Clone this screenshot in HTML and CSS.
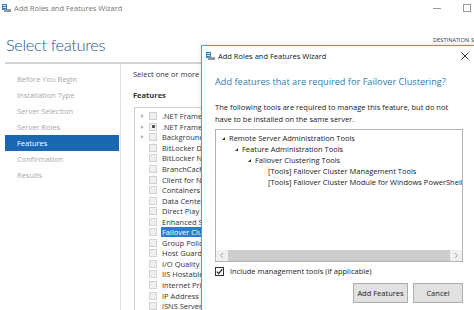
FILE: index.html
```html
<!DOCTYPE html>
<html lang="en">
<head>
<meta charset="UTF-8">
<link rel="stylesheet" href="styles.css">
<title>Add Roles and Features Wizard</title>
</head>
<body>
<div class="window">

  <!-- title bar -->
  <div class="titlebar">
    <svg class="appicon" width="9" height="8" viewBox="0 0 9 8">
      <rect x="0" y="0" width="5" height="6" fill="#3b7fc4"/>
      <rect x="1" y="1" width="3" height="1" fill="#d6e7f7"/>
      <rect x="1" y="3" width="3" height="1" fill="#d6e7f7"/>
      <rect x="2" y="5" width="7" height="3" fill="#8c9aa6"/>
    </svg>
    <span class="title">Add Roles and Features Wizard</span>
    <div class="winctl">
      <span class="min"></span>
      <span class="max"></span>
    </div>
  </div>

  <!-- header -->
  <div class="header">
    <h1>Select features</h1>
    <div class="dest">DESTINATION S</div>
  </div>

  <div class="main">
    <ul class="nav">
      <li>Before You Begin</li>
      <li>Installation Type</li>
      <li>Server Selection</li>
      <li>Server Roles</li>
      <li class="current">Features</li>
      <li>Confirmation</li>
      <li>Results</li>
    </ul>

    <div class="content">
      <p class="intro">Select one or more features to install on the selected server.</p>
      <h2>Features</h2>
      <div class="featlist">
        <div class="row"><span class="tri"></span><span class="cb"></span><span class="name">.NET Framework 3.5 Features</span></div>
        <div class="row"><span class="tri"></span><span class="cb part"></span><span class="name">.NET Framework 4.6 Features</span></div>
        <div class="row"><span class="tri"></span><span class="cb"></span><span class="name">Background Intelligent Transfer Service</span></div>
        <div class="row"><span class="notri"></span><span class="cb"></span><span class="name">BitLocker Drive Encryption</span></div>
        <div class="row"><span class="notri"></span><span class="cb"></span><span class="name">BitLocker Network Unlock</span></div>
        <div class="row"><span class="notri"></span><span class="cb"></span><span class="name">BranchCache</span></div>
        <div class="row"><span class="notri"></span><span class="cb"></span><span class="name">Client for NFS</span></div>
        <div class="row"><span class="notri"></span><span class="cb"></span><span class="name">Containers</span></div>
        <div class="row"><span class="notri"></span><span class="cb"></span><span class="name">Data Center Bridging</span></div>
        <div class="row"><span class="notri"></span><span class="cb"></span><span class="name">Direct Play</span></div>
        <div class="row"><span class="notri"></span><span class="cb"></span><span class="name">Enhanced Storage</span></div>
        <div class="row"><span class="notri"></span><span class="cb"></span><span class="name sel">Failover Clustering</span></div>
        <div class="row"><span class="notri"></span><span class="cb"></span><span class="name">Group Policy Management</span></div>
        <div class="row"><span class="notri"></span><span class="cb"></span><span class="name">Host Guardian Hyper-V Support</span></div>
        <div class="row"><span class="notri"></span><span class="cb"></span><span class="name">I/O Quality of Service</span></div>
        <div class="row"><span class="notri"></span><span class="cb"></span><span class="name">IIS Hostable Web Core</span></div>
        <div class="row"><span class="notri"></span><span class="cb"></span><span class="name">Internet Printing Client</span></div>
        <div class="row"><span class="notri"></span><span class="cb"></span><span class="name">IP Address Management (IPAM) Server</span></div>
        <div class="row"><span class="notri"></span><span class="cb"></span><span class="name">iSNS Server service</span></div>
      </div>
    </div>
  </div>

  <!-- modal dialog -->
  <div class="dialog">
    <div class="dlg-title">
      <svg class="appicon" width="9" height="8" viewBox="0 0 9 8">
        <rect x="0" y="0" width="5" height="6" fill="#3b7fc4"/>
        <rect x="1" y="1" width="3" height="1" fill="#d6e7f7"/>
        <rect x="1" y="3" width="3" height="1" fill="#d6e7f7"/>
        <rect x="2" y="5" width="7" height="3" fill="#8c9aa6"/>
      </svg>
      <span class="dlg-name">Add Roles and Features Wizard</span>
      <svg class="close" width="8" height="8" viewBox="0 0 8 8">
        <path d="M0.5 0.5 L7.5 7.5 M7.5 0.5 L0.5 7.5" stroke="#333" stroke-width="1"/>
      </svg>
    </div>
    <div class="dlg-body">
      <h3>Add features that are required for Failover Clustering?</h3>
      <p class="desc">The following tools are required to manage this feature, but do not<br>have to be installed on the same server.</p>
      <div class="tree">
        <div class="tree-items">
          <div class="node lv0"><span class="exp"></span>Remote Server Administration Tools</div>
          <div class="node lv1"><span class="exp"></span>Feature Administration Tools</div>
          <div class="node lv2"><span class="exp"></span>Failover Clustering Tools</div>
          <div class="node lv3">[Tools] Failover Cluster Management Tools</div>
          <div class="node lv3">[Tools] Failover Cluster Module for Windows PowerShell</div>
        </div>
        <div class="hscroll">
          <svg class="arrow" width="12" height="11" viewBox="0 0 12 11"><path d="M7 3 L4.5 5.5 L7 8" fill="none" stroke="#a0a0a0" stroke-width="1"/></svg>
          <span class="thumb"></span>
          <svg class="arrow" width="12" height="11" viewBox="0 0 12 11"><path d="M5 3 L7.5 5.5 L5 8" fill="none" stroke="#a0a0a0" stroke-width="1"/></svg>
        </div>
      </div>
      <label class="include">
        <span class="check">
          <svg width="7" height="7" viewBox="0 0 7 7"><path d="M0.8 3.6 L2.7 5.6 L6.3 1.2" fill="none" stroke="#222" stroke-width="1.3"/></svg>
        </span>
        Include management tools (if applicable)
      </label>
      <div class="buttons">
        <button type="button" class="btn">Add Features</button>
        <button type="button" class="btn">Cancel</button>
      </div>
    </div>
  </div>

</div>
</body>
</html>
```

FILE: styles.css
```css
body { margin: 0; font-family: "Open Sans", "Noto Sans", sans-serif; font-size: 7.5px; color: #222; background: #fff; }
.window { position: relative; width: 474px; height: 310px; overflow: hidden; background: #fff; }

.titlebar { height: 16px; display: flex; align-items: center; padding-left: 2px; color: #777; }
.titlebar .title { margin-left: 3px; }
.winctl { margin-left: auto; display: flex; align-items: center; gap: 22px; padding-right: 3px; }
.winctl .min { width: 8px; height: 1px; background: #999; }
.winctl .max { width: 6px; height: 6px; border: 1px solid #999; }

.header { height: 46px; margin-left: 5px; border-bottom: 2px solid #d4d4d4; display: flex; align-items: flex-start; }
.header h1 { margin: 17px 0 0 1px; font-family: Lato, "Open Sans", sans-serif; font-size: 16.5px; letter-spacing: -0.4px; font-weight: 300; color: #27598a; line-height: 24px; }
.dest { margin-left: auto; margin-top: 20px; font-size: 5.5px; color: #333; letter-spacing: 0.1px; white-space: nowrap; }

.main { display: flex; height: 246px; }
.nav { list-style: none; margin: 0 0 0 5px; padding: 7px 0 0; width: 115px; border-right: 1px solid #e2e2e2; }
.nav li { height: 16px; line-height: 16px; padding-left: 12px; color: #a9a9a9; }
.nav li.current { background: #1a68b4; color: #fff; margin-right: 1px; }

.content { padding: 4px 0 0 12px; width: 68px; overflow: hidden; }
.intro { margin: 0; line-height: 12px; color: #333; white-space: nowrap; }
.content h2 { margin: 9px 0 0; font-size: 7.5px; font-weight: bold; line-height: 12px; color: #333; }
.featlist { margin: 6px 0 0 1px; border: 1px solid #d0d0d0; border-right: none; padding-top: 3px; height: 240px; }
.row { height: 10.55px; display: flex; align-items: center; white-space: nowrap; }
.tri, .notri { width: 8px; margin-left: 6px; height: 6px; flex: none; }
.tri { width: 0; height: 0; border-left: 3px solid #b8b8b8; border-top: 2.5px solid transparent; border-bottom: 2.5px solid transparent; margin-right: 5px; }
.cb { width: 8px; height: 8px; border: 1px solid #d2d2d2; background: #efefef; box-sizing: border-box; margin-right: 5px; flex: none; position: relative; }
.cb.part::after { content: ""; position: absolute; left: 1.5px; top: 1.5px; width: 3px; height: 3px; background: #555; }
.name { color: #333; padding: 0 1px; margin-left: -1px; line-height: 10px; }
.name.sel { background: #2a7dd2; color: #fff; padding-right: 20px; }

.dialog { position: absolute; left: 201px; top: 45px; width: 290px; height: 280px; background: #fff; border: 1px solid #4f9be0; box-shadow: 0 0 5px rgba(0,0,0,0.12); }
.dlg-title { height: 20px; display: flex; align-items: center; padding-left: 4px; color: #111; white-space: nowrap; }
.dlg-name { margin-left: 3px; }
.dlg-title .close { margin-left: auto; margin-right: 23px; }
.dlg-body { padding: 0 13px; width: 248px; }
.dlg-body h3 { margin: 9px 0 0; font-size: 9.2px; font-weight: normal; color: #2e7cb0; line-height: 14px; white-space: nowrap; }
.desc { margin: 12px 0 0; line-height: 12px; color: #222; white-space: nowrap; }
.tree { margin-top: 4px; border: 1px solid #b4b4b4; height: 131px; display: flex; flex-direction: column; overflow: hidden; }
.tree-items { flex: 1; padding-top: 3px; }
.node { height: 11px; line-height: 11px; white-space: nowrap; display: flex; align-items: center; color: #222; }
.node.lv0 { padding-left: 6px; }
.node.lv1 { padding-left: 19px; }
.node.lv2 { padding-left: 32px; }
.node.lv3 { padding-left: 52px; }
.exp { width: 0; height: 0; border-left: 3.5px solid transparent; border-bottom: 3.5px solid #333; margin-right: 4px; flex: none; }
.hscroll { height: 11px; background: #f0f0f0; display: flex; align-items: center; }
.hscroll .arrow { flex: none; }
.hscroll .thumb { flex: 1; height: 11px; background: #cdcdcd; }

.include { display: flex; align-items: center; margin-top: 4px; height: 10px; color: #222; }
.check { width: 9px; height: 9px; border: 1px solid #333; box-sizing: border-box; display: flex; align-items: center; justify-content: center; margin-right: 6px; }
.buttons { display: flex; justify-content: flex-end; gap: 5px; margin-top: 7px; }
.btn { font-family: inherit; font-size: 7.5px; color: #222; background: #e1e1e1; border: 1px solid #adadad; height: 20px; padding: 0; border-radius: 0; }
.btn:first-child { width: 55px; }
.btn:last-child { width: 50px; }
```
